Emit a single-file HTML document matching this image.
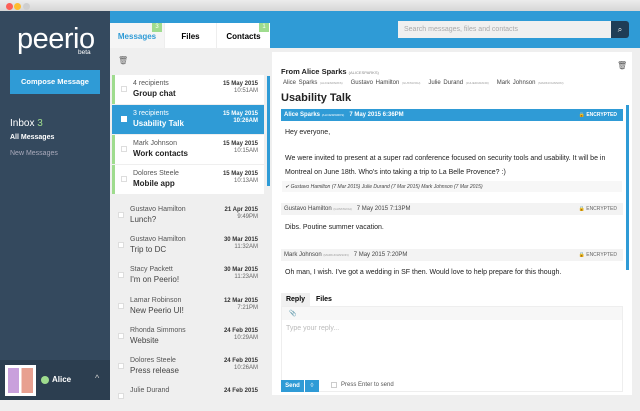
<!DOCTYPE html><html><head><style>
*{box-sizing:border-box;margin:0;padding:0}
body{width:640px;height:400px;overflow:hidden;font-family:"Liberation Sans",sans-serif;background:#efefef;position:relative}
.a{position:absolute}
.tb{left:0;top:0;width:640px;height:11px;background:linear-gradient(#ececec,#d6d6d6)}
.dot{top:3px;width:7px;height:7px;border-radius:50%}
.side{left:0;top:11px;width:110px;height:389px;background:#34495e}
.bot{left:0;top:360px;width:110px;height:40px;background:#2c3e50}
.blue{background:#2f9bd6}
.li{position:absolute;left:112px;width:152px;height:29px;font-size:7px;color:#555}
.li .n{position:absolute;left:18px;top:5px}
.li .s{position:absolute;left:18px;top:14px;font-size:8px;color:#444}
.li .d{position:absolute;right:6px;top:6px;font-weight:bold;font-size:6px;color:#333}
.li .t{position:absolute;right:6px;top:13px;font-size:6px;color:#666}
.li .c{position:absolute;left:6px;top:11px;width:6px;height:6px;background:#fff;border:1px solid #ddd}
.w{background:#fff;border-left:3px solid #9fdc8e}
.w .s{font-weight:bold;color:#222}
.enc{font-size:5px;color:#666;position:absolute;right:6px}
</style></head><body>
<div class="a tb"></div>
<div class="a dot" style="left:6px;background:#fc5f57"></div>
<div class="a dot" style="left:14px;background:#fdbc2e"></div>
<div class="a dot" style="left:23px;background:#cfcfcf"></div>
<div class="a side"></div>
<div class="a" style="left:17px;top:24px;font-size:29px;color:#fff;letter-spacing:-0.5px;line-height:30px">peerio</div>
<div class="a" style="left:78px;top:49px;font-size:6.5px;color:#fff">beta</div>
<div class="a blue" style="left:10px;top:70px;width:90px;height:24px;color:#fff;font-size:7.5px;font-weight:bold;text-align:center;line-height:24px">Compose Message</div>
<div class="a" style="left:10px;top:118px;font-size:10px;color:#fff">Inbox <span style="color:#9fdc8e">3</span></div>
<div class="a" style="left:10px;top:134px;font-size:7px;color:#fff;font-weight:bold">All Messages</div>
<div class="a" style="left:10px;top:150px;font-size:7px;color:#aab">New Messages</div>
<div class="a bot"></div>
<div class="a" style="left:5px;top:365px;width:31px;height:31px;background:#fff;padding:3px"><div style="width:25px;height:25px;background:linear-gradient(90deg,#c9a0dc 45%,#fff 45%,#fff 55%,#e8a090 55%)"></div></div>
<div class="a" style="left:41px;top:376px;width:8px;height:8px;border-radius:50%;background:#9fdc8e"></div>
<div class="a" style="left:52px;top:375px;font-size:8px;color:#fff;font-weight:bold">Alice</div>
<div class="a" style="left:95px;top:373px;font-size:9px;color:#ccc">^</div>
<div class="a blue" style="left:110px;top:11px;width:530px;height:37px"></div>
<div class="a" style="left:110px;top:23px;width:160px;height:25px;background:#fff"></div>
<div class="a" style="left:110px;top:23px;width:54px;height:25px;background:#f5f5f5;font-size:8px;font-weight:bold;color:#2f9bd6;text-align:center;line-height:27px">Messages</div>
<div class="a" style="left:164px;top:23px;width:52px;height:25px;font-size:8px;font-weight:bold;text-align:center;line-height:27px;border-left:1px solid #eee">Files</div>
<div class="a" style="left:216px;top:23px;width:54px;height:25px;font-size:8px;font-weight:bold;text-align:center;line-height:27px;border-left:1px solid #eee">Contacts</div>
<div class="a" style="left:152px;top:23px;width:10px;height:9px;background:#9fdc8e;color:#fff;font-size:6px;text-align:center;line-height:9px">3</div>
<div class="a" style="left:259px;top:23px;width:10px;height:9px;background:#9fdc8e;color:#fff;font-size:6px;text-align:center;line-height:9px">1</div>
<div class="a" style="left:118px;top:56px;font-size:8px;color:#666">🗑</div>
<div class="a" style="left:398px;top:21px;width:213px;height:17px;background:#f0f0f0;font-size:7px;color:#aaa;padding:5px 6px">Search messages, files and contacts</div>
<div class="a" style="left:611px;top:21px;width:18px;height:17px;background:#1f3d56;border-radius:0 3px 3px 0;color:#fff;font-size:8px;text-align:center;line-height:17px">⌕</div>
<div class="a" style="left:267px;top:76px;width:3px;height:110px;background:#2f9bd6"></div>

<div class="li w" style="top:75px"><div class="c"></div><div class="n">4 recipients</div><div class="s">Group chat</div><div class="d">15 May 2015</div><div class="t">10:51AM</div></div>
<div class="li" style="top:105px;background:#2f9bd6;border-left:3px solid #2f9bd6;color:#fff"><div class="c" style="border:none"></div><div class="n">3 recipients</div><div class="s" style="color:#fff;font-weight:bold">Usability Talk</div><div class="d" style="color:#fff">15 May 2015</div><div class="t" style="color:#fff;font-weight:bold">10:26AM</div></div>
<div class="li w" style="top:135px"><div class="c"></div><div class="n">Mark Johnson</div><div class="s">Work contacts</div><div class="d">15 May 2015</div><div class="t">10:15AM</div></div>
<div class="li w" style="top:165px"><div class="c"></div><div class="n">Dolores Steele</div><div class="s">Mobile app</div><div class="d">15 May 2015</div><div class="t">10:13AM</div></div>
<div class="li" style="top:201px"><div class="c"></div><div class="n">Gustavo Hamilton</div><div class="s">Lunch?</div><div class="d">21 Apr 2015</div><div class="t">9:49PM</div></div>
<div class="li" style="top:231px"><div class="c"></div><div class="n">Gustavo Hamilton</div><div class="s">Trip to DC</div><div class="d">30 Mar 2015</div><div class="t">11:32AM</div></div>
<div class="li" style="top:261px"><div class="c"></div><div class="n">Stacy Packett</div><div class="s">I'm on Peerio!</div><div class="d">30 Mar 2015</div><div class="t">11:23AM</div></div>
<div class="li" style="top:292px"><div class="c"></div><div class="n">Lamar Robinson</div><div class="s">New Peerio UI!</div><div class="d">12 Mar 2015</div><div class="t">7:21PM</div></div>
<div class="li" style="top:322px"><div class="c"></div><div class="n">Rhonda Simmons</div><div class="s">Website</div><div class="d">24 Feb 2015</div><div class="t">10:29AM</div></div>
<div class="li" style="top:352px"><div class="c"></div><div class="n">Dolores Steele</div><div class="s">Press release</div><div class="d">24 Feb 2015</div><div class="t">10:26AM</div></div>
<div class="li" style="top:382px"><div class="c"></div><div class="n">Julie Durand</div><div class="d">24 Feb 2015</div></div>

<div class="a" style="left:272px;top:52px;width:360px;height:343px;background:#fff"></div>
<div class="a" style="left:281px;top:67px;font-size:7.5px;font-weight:bold;color:#222">From Alice Sparks <span style="font-size:4px;font-weight:normal;color:#888">(ALICESPARKS)</span></div>
<div class="a" style="left:617px;top:61px;font-size:8px;color:#555">🗑</div>
<div class="a" style="left:283px;top:80px;font-size:6px;color:#444;word-spacing:1px">Alice Sparks <span style="font-size:3px;color:#999">(ALICESPARKS)</span>&nbsp;&nbsp; Gustavo Hamilton <span style="font-size:3px;color:#999">(GUSTAVOH)</span>&nbsp;&nbsp; Julie Durand <span style="font-size:3px;color:#999">(JULIEDURAND)</span>&nbsp;&nbsp; Mark Johnson <span style="font-size:3px;color:#999">(MARKJOHNSON)</span></div>
<div class="a" style="left:281px;top:92px;font-size:11px;font-weight:bold;color:#222">Usability Talk</div>
<div class="a" style="left:626px;top:105px;width:3px;height:165px;background:#2f9bd6"></div>
<div class="a blue" style="left:281px;top:109px;width:342px;height:12px;color:#fff;font-size:6px;font-weight:bold;padding:3px 3px">Alice Sparks <span style="font-size:3px;font-weight:normal">(ALICESPARKS)</span>&nbsp;&nbsp; 7 May 2015 6:36PM<span class="enc" style="color:#fff;top:3px">🔒 ENCRYPTED</span></div>
<div class="a" style="left:285px;top:129px;font-size:7px;color:#222">Hey everyone,</div>
<div class="a" style="left:285px;top:152px;font-size:7px;color:#222;line-height:14px;width:335px">We were invited to present at a super rad conference focused on security tools and usability. It will be in Montreal on June 18th. Who's into taking a trip to La Belle Provence? :)</div>
<div class="a" style="left:282px;top:181px;width:340px;height:11px;background:#f7f7f7;font-size:5px;font-style:italic;color:#444;padding:3px 3px">✔ Gustavo Hamilton (7 Mar 2015) Julie Durand (7 Mar 2015) Mark Johnson (7 Mar 2015)</div>
<div class="a" style="left:281px;top:203px;width:342px;height:12px;background:#f3f3f3;font-size:6px;color:#444;padding:3px 3px">Gustavo Hamilton <span style="font-size:3px;color:#999">(GUSTAVOH)</span>&nbsp;&nbsp; 7 May 2015 7:13PM<span class="enc" style="top:3px">🔒 ENCRYPTED</span></div>
<div class="a" style="left:285px;top:224px;font-size:7px;color:#222">Dibs. Poutine summer vacation.</div>
<div class="a" style="left:281px;top:249px;width:342px;height:12px;background:#f3f3f3;font-size:6px;color:#444;padding:3px 3px">Mark Johnson <span style="font-size:3px;color:#999">(MARKJOHNSON)</span>&nbsp;&nbsp; 7 May 2015 7:20PM<span class="enc" style="top:3px">🔒 ENCRYPTED</span></div>
<div class="a" style="left:285px;top:269px;font-size:7px;color:#222">Oh man, I wish. I've got a wedding in SF then. Would love to help prepare for this though.</div>
<div class="a" style="left:281px;top:293px;width:29px;height:13px;background:#f0f0f0;font-size:7px;font-weight:bold;text-align:center;line-height:13px">Reply</div>
<div class="a" style="left:316px;top:293px;font-size:7px;font-weight:bold;line-height:13px">Files</div>
<div class="a" style="left:281px;top:306px;width:342px;height:86px;border:1px solid #eee"></div>
<div class="a" style="left:282px;top:307px;width:340px;height:13px;background:#f7f7f7;font-size:6px;color:#666;padding:3px 7px">📎</div>
<div class="a" style="left:286px;top:325px;font-size:7px;color:#bbb">Type your reply...</div>
<div class="a blue" style="left:281px;top:380px;width:23px;height:12px;color:#fff;font-size:6px;font-weight:bold;text-align:center;line-height:12px">Send</div>
<div class="a blue" style="left:305px;top:380px;width:14px;height:12px;color:#fff;font-size:6px;text-align:center;line-height:12px">◊</div>
<div class="a" style="left:331px;top:382px;width:6px;height:6px;border:1px solid #ccc"></div>
<div class="a" style="left:341px;top:382px;font-size:6px;color:#555">Press Enter to send</div>
</body></html>
